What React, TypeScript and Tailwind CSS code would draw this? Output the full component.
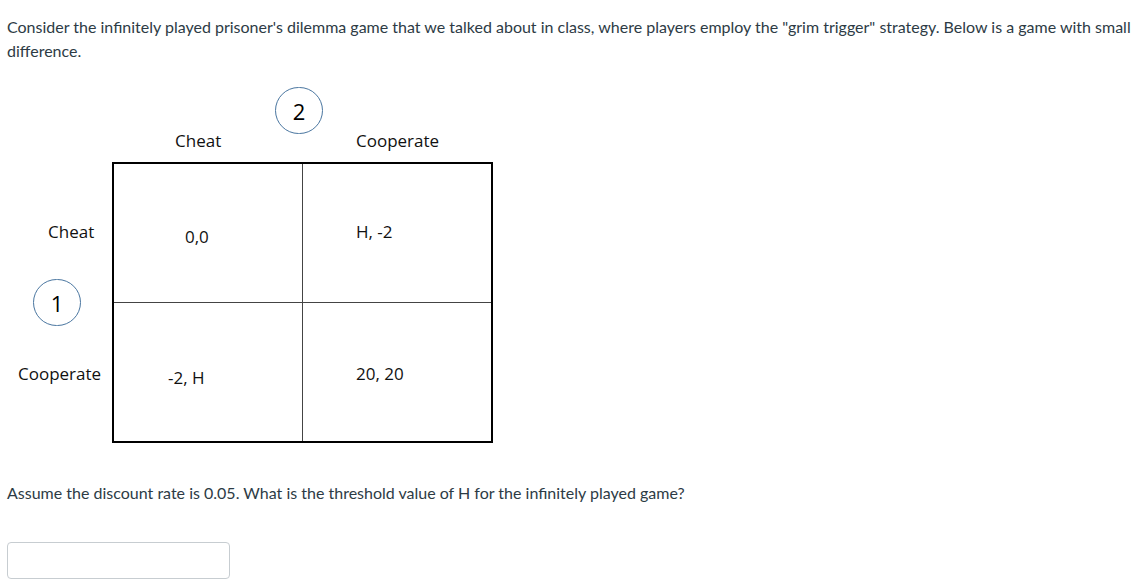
import * as React from 'react';

const diagramFont = { fontFamily: '"Open Sans", "Noto Sans", sans-serif' };

function PlayerBadge({ n }: { n: number }) {
    return (
        <div className="flex h-[47px] w-[48px] items-center justify-center rounded-full border-[1.5px] border-[#4a76a0] text-[22px] text-black">
            {n}
        </div>
    );
}

function PayoffMatrix() {
    return (
        <div className="-ml-[7px] mt-[24px] flex text-[17px] leading-[24px] text-[#111]" style={diagramFont}>
            {/* row labels for player 1 */}
            <div className="flex w-[112px] flex-col pt-[133px]">
                <div className="pl-[48px]">Cheat</div>
                <div className="ml-[33px] mt-[35px]">
                    <PlayerBadge n={1} />
                </div>
                <div className="mt-[36px] pl-[18px]">Cooperate</div>
            </div>

            {/* column labels for player 2 + the grid */}
            <div className="flex flex-col">
                <div className="ml-[163px] mb-[-5px]">
                    <PlayerBadge n={2} />
                </div>
                <div className="grid grid-cols-[190px_191px]">
                    <div className="pl-[63px]">Cheat</div>
                    <div className="pl-[54px]">Cooperate</div>
                </div>
                <div className="mt-[9px] grid h-[281px] w-[381px] grid-cols-[189px_1fr] grid-rows-[139px_1fr] border-2 border-black">
                    <div className="border-b border-r border-[#444] pl-[71px] pt-[61px]">0,0</div>
                    <div className="border-b border-[#444] pl-[53px] pt-[56px]">H, -2</div>
                    <div className="border-r border-[#444] pl-[54px] pt-[63px]">-2, H</div>
                    <div className="pl-[53px] pt-[59px]">20, 20</div>
                </div>
            </div>
        </div>
    );
}

export default function App() {
    return (
        <div
            className="min-h-[587px] bg-white px-[7px] pt-[15px] text-[16px] leading-[24px] text-[#2d3b45]"
            style={{ fontFamily: 'Lato, "Liberation Sans", sans-serif' }}
        >
            <p>
                Consider the infinitely played prisoner's dilemma game that we talked about in class, where players employ the "grim
                trigger" strategy. Below is a game with small difference.
            </p>

            <PayoffMatrix />

            <p className="mt-[38px]">
                Assume the discount rate is 0.05. What is the threshold value of H for the infinitely played game?
            </p>

            <input
                type="text"
                className="mt-[37px] block h-[37px] w-[223px] rounded-[4px] border border-[#c7cdd1] bg-white px-2 outline-none"
            />
        </div>
    );
}
